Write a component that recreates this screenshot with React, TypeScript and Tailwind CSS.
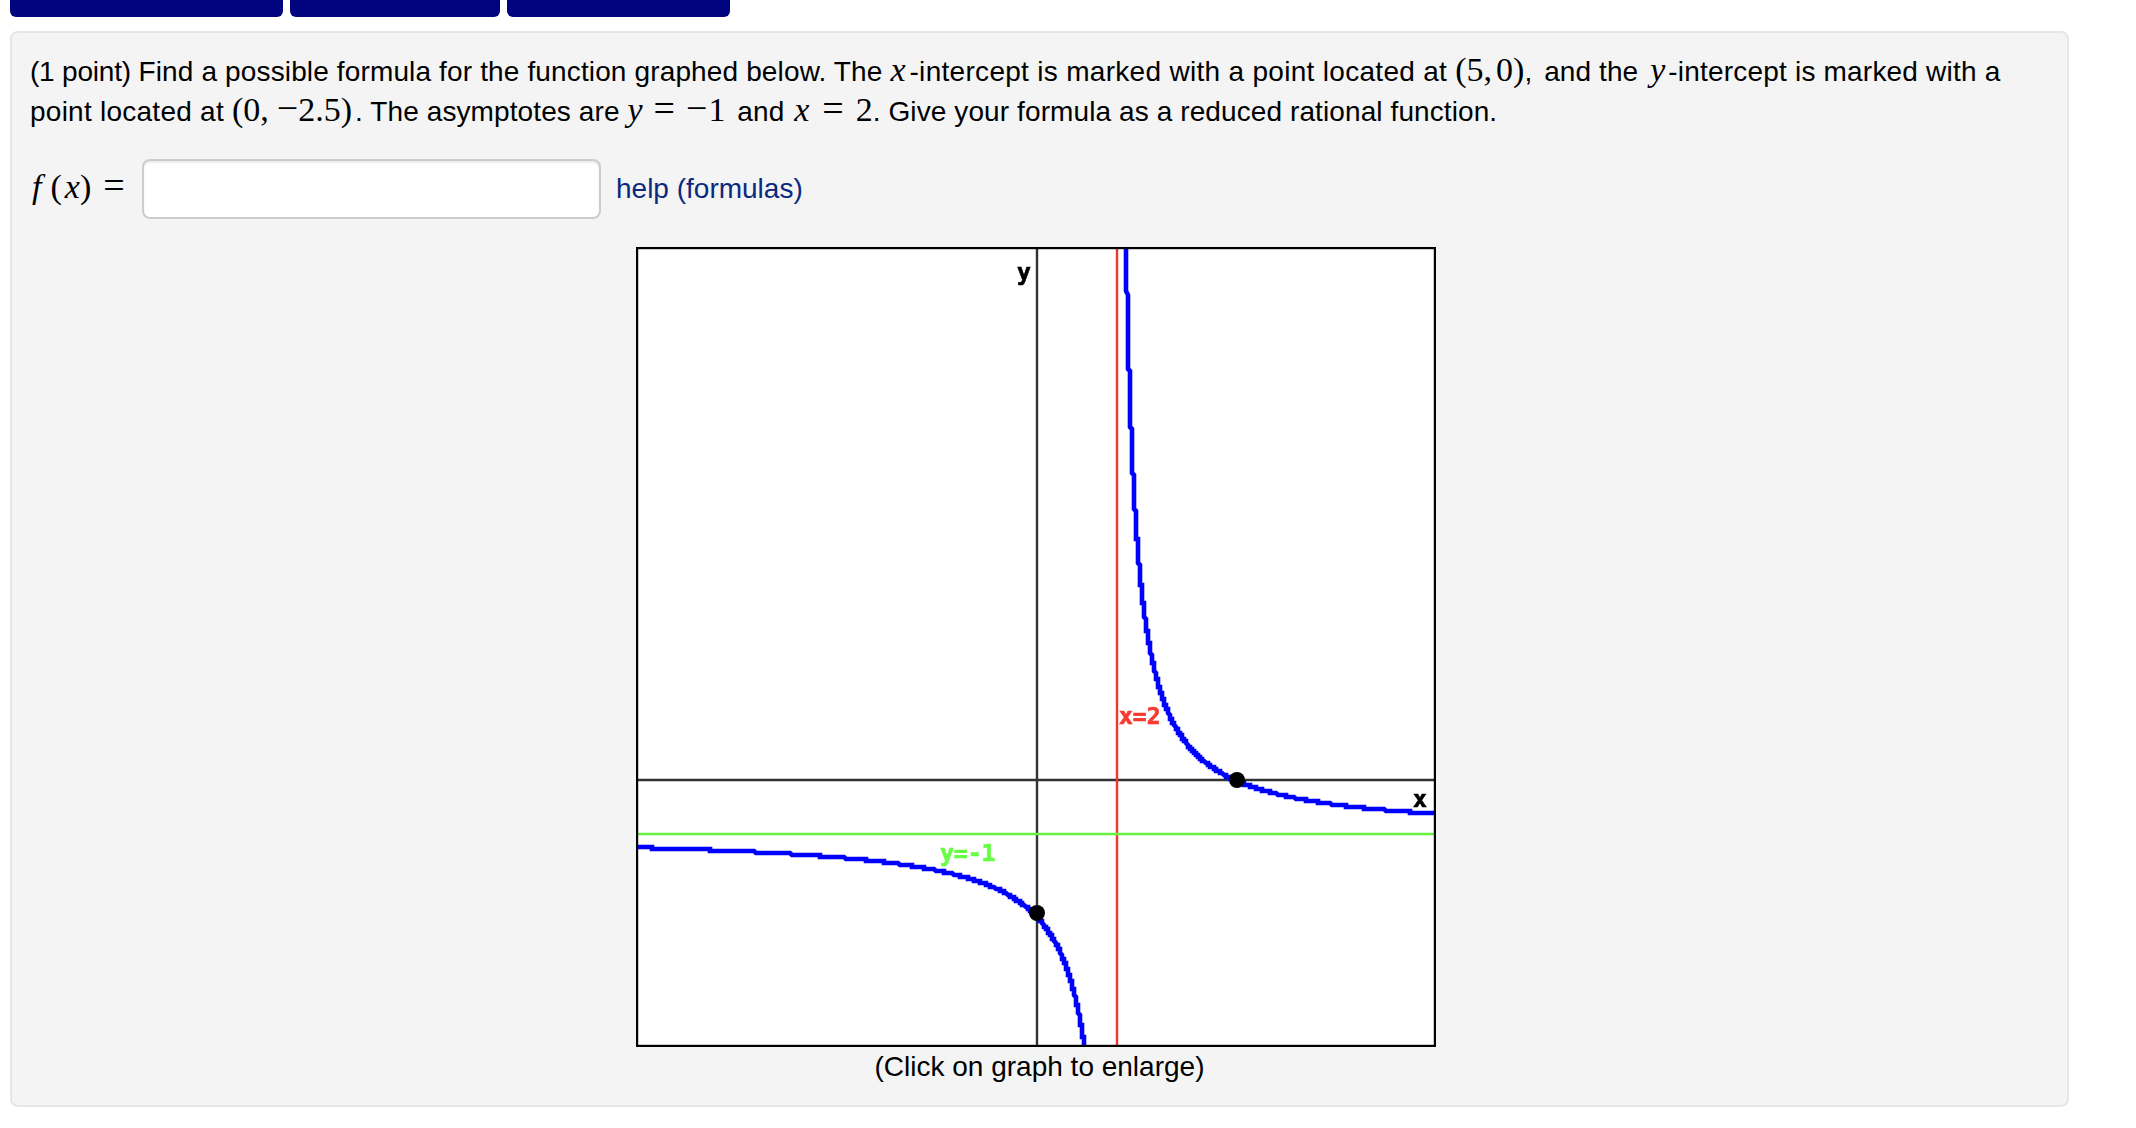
const tabs = ["w-[273px]", "w-[210px]", "w-[223px]"];

// same curve as the picture: f(x) = (5 - x) / (x - 2), snapped to the 400px grid of the plot
function branch(from: number, to: number) {
  let d = "";
  let last = "";
  for (let i = 0; i <= 6000; i++) {
    const x = from + ((to - from) * i) / 6000;
    const y = (5 - x) / (x - 2);
    const px = Math.floor(200 + 20 * x);
    const py = Math.round(266.5 - 27 * y);
    if (py < -4 || py > 404) continue;
    const key = px + "," + py;
    if (key === last) continue;
    d += (d ? "L" : "M") + key;
    last = key;
  }
  return d;
}

function M({ children, className = "" }: { children: React.ReactNode; className?: string }) {
  return <span className={`font-['Liberation_Serif'] text-[34px] leading-[0] tracking-normal ${className}`}>{children}</span>;
}

function V({ children, className = "" }: { children: React.ReactNode; className?: string }) {
  return <span className={`font-['Liberation_Serif'] text-[34px] italic leading-[0] tracking-normal ${className}`}>{children}</span>;
}

// relation signs and the minus sign are wider in the picture than at the digit size
function Op({ children, className = "" }: { children: React.ReactNode; className?: string }) {
  return <span className={`font-['Liberation_Serif'] text-[38px] leading-[0] tracking-normal ${className}`}>{children}</span>;
}

function Graph() {
  return (
    <svg viewBox="0 0 400 400" className="block h-[800px] w-[800px] bg-white blur-[0.6px]">
      <g fill="none">
        <path d="M200.5 0V400" stroke="#333" strokeWidth="1.2" />
        <path d="M0 266.5H400" stroke="#333" strokeWidth="1.2" />
        <path d="M240.5 0V400" stroke="#f0352c" strokeWidth="1.2" />
        <path d="M0 293.5H400" stroke="#66f040" strokeWidth="1.2" />
        <path d={branch(-10, 1.9)} stroke="#0000ff" strokeWidth="2.3" />
        <path d={branch(2.1, 10)} stroke="#0000ff" strokeWidth="2.3" />
        <rect x="0.5" y="0.5" width="399" height="399" stroke="#000" strokeWidth="1.2" />
      </g>
      <circle cx="300.5" cy="266.5" r="4" fill="#000" />
      <circle cx="200.5" cy="333" r="4" fill="#000" />
      <g className="font-['DejaVu_Sans_Mono'] text-[11.5px] font-bold" strokeWidth="0.35">
        <text x="190.5" y="16.5" fill="#000" stroke="#000">y</text>
        <text x="388.5" y="280" fill="#000" stroke="#000">x</text>
        <text x="241.5" y="238.5" fill="#f83a30" stroke="#f83a30">x=2</text>
        <text x="152" y="307" fill="#66ff44" stroke="#66ff44">y=-1</text>
      </g>
    </svg>
  );
}

export default function App() {
  return (
    <div className="min-h-[1128px] bg-white font-['Liberation_Sans',sans-serif] text-[28px] leading-[40px] text-black">
      <div className="ml-[10px] flex gap-[7px]">
        {tabs.map((w) => (
          <div key={w} className={`${w} h-[17px] rounded-b-[6px] bg-[#00047f]`} />
        ))}
      </div>
      <div className="mt-[14px] ml-[10px] w-[2059px] rounded-[8px] border-2 border-[#e6e6e6] bg-[#f4f4f4] px-[18px] pt-[19px] pb-[18px]">
        <p className="whitespace-nowrap tracking-[0.1px]">
          <span className="tracking-[-0.2px]">(1 point) </span>
          <span className="tracking-[0.14px]">Find a possible formula for the function graphed below. The </span>
          <V className="mr-[4px]">x</V>
          <span className="tracking-[0.3px]">-intercept is marked with a point located at </span>
          <M>(5,<span className="ml-[4px]">0)</span></M>,<span className="ml-[4px]"> and the </span><V className="ml-[4px] mr-[3px]">y</V>
          <span className="tracking-[0.2px]">-intercept is marked with a</span>
          <br />
          <span className="tracking-[0.25px]">point located at </span>
          <M>(0,</M><Op className="ml-[8px]">−</Op><M>2.5)</M><span className="ml-[3px]">.</span> The asymptotes are <V>y</V><Op className="ml-[11px]">=</Op><Op className="ml-[11px]">−</Op><M className="ml-[1px]">1</M><span className="ml-[4px]"> and </span><V className="ml-[2px]">x</V><Op className="ml-[13px]">=</Op><M className="ml-[12px]">2</M>. Give your formula as a reduced rational function.
        </p>
        <div className="mt-[27px] flex items-center">
          <span className="w-[112px] whitespace-nowrap">
            <V className="ml-[2px]">f</V>
            <M className="ml-[9px]">(</M>
            <V className="ml-[3px]">x</V>
            <M>)</M>
            <Op className="ml-[12px]">=</Op>
          </span>
          <div className="h-[60px] w-[459px] rounded-[8px] border-2 border-[#cccccc] bg-white shadow-[inset_0_2px_2px_rgba(0,0,0,0.08)]" />
          <a className="ml-[15px] text-[#0a2a80]">help (formulas)</a>
        </div>
        <div className="mt-[28px] flex flex-col items-center">
          <div className="mr-[7px]">
            <Graph />
          </div>
          <p>(Click on graph to enlarge)</p>
        </div>
      </div>
    </div>
  );
}
